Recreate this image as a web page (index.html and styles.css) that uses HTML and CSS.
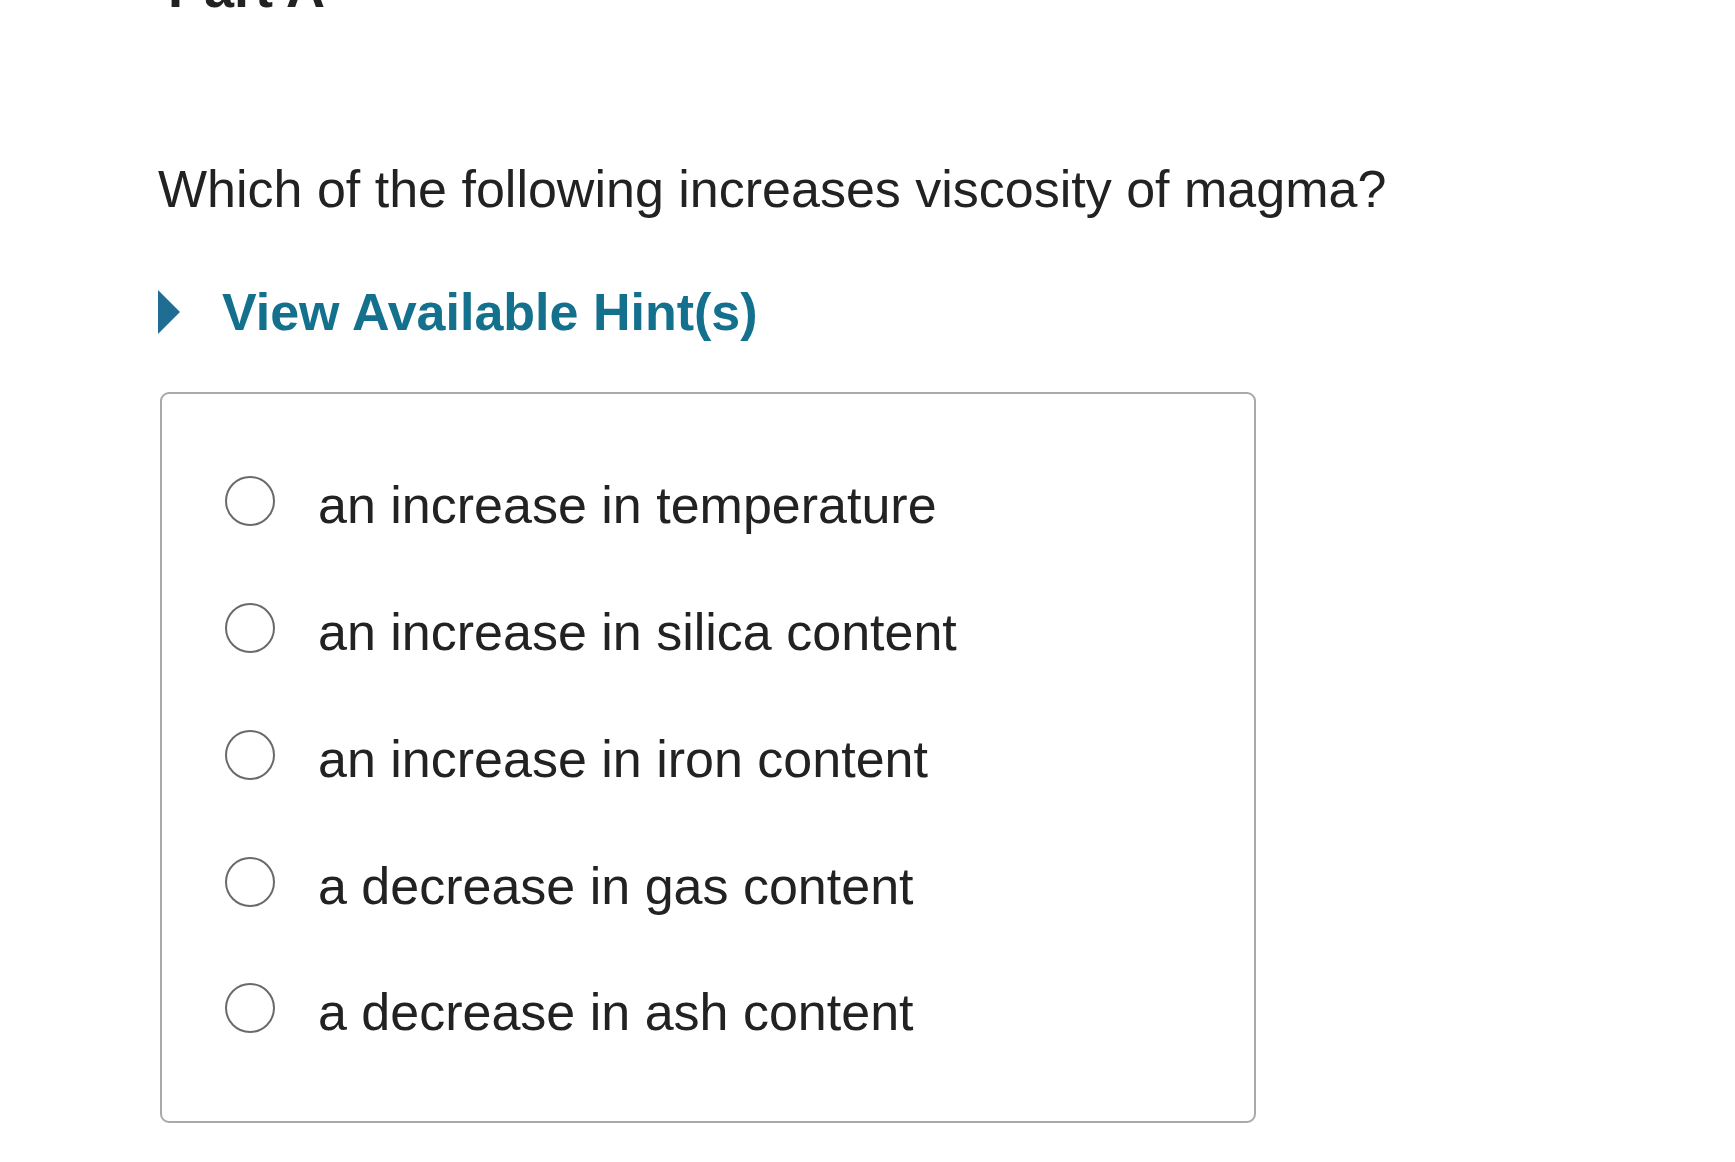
FILE: index.html
```html
<!DOCTYPE html>
<html lang="en">
<head>
    <meta charset="UTF-8">
    <meta name="viewport" content="width=device-width, initial-scale=1.0">
    <title>Part A</title>
    <link rel="stylesheet" href="styles.css">
</head>
<body>
    <div class="question-container">
        <h2 class="part-title">Part A</h2>

        <p class="question-text">Which of the following increases viscosity of magma?</p>

        <!-- Hints toggle -->
        <div class="hint-toggle">
            <svg class="hint-arrow" width="24" height="46" viewBox="0 0 24 46">
                <polygon points="1,1 23,23 1,45" fill="#1f6d93"/>
            </svg>
            <span class="hint-label">View Available Hint(s)</span>
        </div>

        <!-- Answer choices -->
        <div class="choices-box">
            <label class="choice">
                <input type="radio" name="answer" value="a">
                <span class="choice-text">an increase in temperature</span>
            </label>
            <label class="choice">
                <input type="radio" name="answer" value="b">
                <span class="choice-text">an increase in silica content</span>
            </label>
            <label class="choice">
                <input type="radio" name="answer" value="c">
                <span class="choice-text">an increase in iron content</span>
            </label>
            <label class="choice">
                <input type="radio" name="answer" value="d">
                <span class="choice-text">a decrease in gas content</span>
            </label>
            <label class="choice">
                <input type="radio" name="answer" value="e">
                <span class="choice-text">a decrease in ash content</span>
            </label>
        </div>
    </div>
</body>
</html>
```

FILE: styles.css
```css
body {
    margin: 0;
    background: #fff;
    font-family: "Liberation Sans", Arial, Helvetica, sans-serif;
    color: #222;
    overflow: hidden;
}
.question-container {
    padding-left: 158px;
}
.part-title {
    margin: -39px 0 0 10px;
    font-size: 54px;
    line-height: 54px;
    font-weight: bold;
    color: #222;
}
.question-text {
    margin: 144px 0 0 0;
    font-size: 52px;
    line-height: 60px;
}
.hint-toggle {
    display: flex;
    align-items: center;
    margin-top: 63px;
    height: 60px;
    cursor: pointer;
}
.hint-arrow {
    margin-left: -1px;
    margin-right: 41px;
    flex-shrink: 0;
}
.hint-label {
    font-size: 52px;
    line-height: 60px;
    font-weight: bold;
    color: #13718d;
}

/* Choices */
.choices-box {
    box-sizing: border-box;
    width: 1096px;
    height: 731px;
    margin: 50px 0 0 2px;
    padding: 44px 0 0 63px;
    border: 2px solid #a9a9a9;
    border-radius: 9px;
    display: flex;
    flex-direction: column;
}
.choice {
    display: flex;
    align-items: center;
    height: 126.75px;
    cursor: pointer;
}
.choice input {
    appearance: none;
    -webkit-appearance: none;
    box-sizing: border-box;
    width: 50px;
    height: 50px;
    margin: 0 43px 0 0;
    border: 2px solid #6a6a6a;
    border-radius: 50%;
    background: #fff;
    flex-shrink: 0;
}
.choice input:checked {
    background: radial-gradient(circle, #1f6d93 40%, #fff 44%);
}
.choice-text {
    font-size: 52px;
    line-height: 60px;
    padding-top: 8px;
    color: #222;
}
```
